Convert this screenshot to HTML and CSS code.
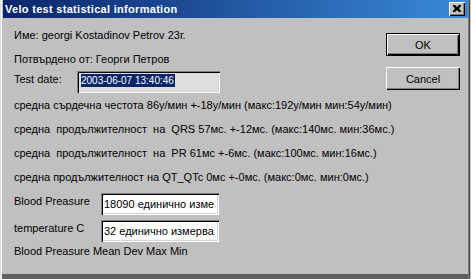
FILE: index.html
```html
<!DOCTYPE html>
<html>
<head>
<meta charset="utf-8">
<link rel="stylesheet" href="styles.css">
</head>
<body>
<div class="window">
  <div class="titlebar">
    <span class="title">Velo test statistical information</span>
    <span class="close"><svg width="8" height="7" viewBox="0 0 8 7"><path d="M0 0h2l2 2 2-2h2v1L6 3.5 8 6v1H6L4 5 2 7H0V6l2-2.5L0 1z" fill="#000"/></svg></span>
  </div>
  <div class="body">
    <div class="top">
      <div class="info">
        <div class="line l-name">Име: georgi Kostadinov Petrov 23г.</div>
        <div class="line l-conf">Потвърдено от: Георги Петров</div>
        <div class="daterow">
          <span class="date-label">Test date:</span>
          <div class="field date-field"><span class="sel">2003-06-07 13:40:46</span></div>
        </div>
      </div>
      <div class="buttons">
        <div class="btn btn-default"><span>OK</span></div>
        <div class="btn"><span>Cancel</span></div>
      </div>
    </div>
    <div class="stats">
      <div class="stat">средна сърдечна честота 86у/мин +-18у/мин (макс:192у/мин мин:54у/мин)</div>
      <div class="stat">средна&nbsp; продължителност&nbsp; на&nbsp; QRS 57мс. +-12мс. (макс:140мс. мин:36мс.)</div>
      <div class="stat">средна&nbsp; продължителност&nbsp; на&nbsp; PR 61мс +-6мс. (макс:100мс. мин:16мс.)</div>
      <div class="stat">средна продължителност на QT_QTc 0мс +-0мс. (макс:0мс. мин:0мс.)</div>
    </div>
    <div class="formrow r1">
      <span class="flabel">Blood Preasure</span>
      <div class="field vfield">18090 единично изме</div>
    </div>
    <div class="formrow r2">
      <span class="flabel">temperature C</span>
      <div class="field vfield">32 единично измерва</div>
    </div>
    <div class="line l-last">Blood Preasure Mean Dev Max Min</div>
  </div>
</div>
</body>
</html>
```
FILE: styles.css
```css
html, body {
  margin: 0;
  padding: 0;
  background: #c0c0c0;
}
.window {
  width: 471px;
  height: 279px;
  box-sizing: border-box;
  background: #c0c0c0;
  font-family: "Liberation Sans", Arial, sans-serif;
  font-size: 11px;
  color: #000;
  padding: 0 3px;
  box-shadow: inset 1px 0 #dcdcdc, inset 2px 0 #ffffff, inset -1px 0 #c8c8c8, inset -2px 0 #404040, inset -3px 0 #808080, inset 0 -5px #5e5e5e;
  overflow: hidden;
}
.titlebar {
  height: 18px;
  background: linear-gradient(to right, #0a246a, #3a8ad8);
  display: flex;
  align-items: center;
  justify-content: space-between;
  padding: 0 3px 0 2px;
}
.title {
  color: #fff;
  font-weight: bold;
  font-size: 11px;
  letter-spacing: 0.3px;
  line-height: 14px;
}
.close {
  width: 16px;
  height: 14px;
  box-sizing: border-box;
  background: #c0c0c0;
  box-shadow: inset 1px 1px #ffffff, inset -1px -1px #000000, inset -2px -2px #808080;
  display: flex;
  align-items: center;
  justify-content: center;
  padding: 0 1px 1px 0;
}
.close svg { display: block; }
.body {
  padding: 0 8px 0 11px;
}
.line {
  height: 14px;
  line-height: 14px;
  white-space: nowrap;
}
.top {
  display: flex;
  justify-content: space-between;
  align-items: flex-start;
}
.info {
  display: flex;
  flex-direction: column;
}
.l-name { margin-top: 10px; }
.l-conf { margin-top: 10px; }
.daterow {
  display: flex;
  align-items: flex-start;
  margin-top: 5px;
  height: 22px;
}
.date-label {
  width: 63px;
  line-height: 14px;
  margin-top: 1px;
}
.field {
  box-sizing: border-box;
  height: 22px;
  background: #ffffff;
  box-shadow: inset 1px 1px #808080, inset 2px 2px #000000, inset -1px -1px #ffffff, inset -2px -2px #d4d4d4;
  white-space: nowrap;
  overflow: hidden;
}
.date-field {
  width: 143px;
  background: #dedede;
  padding: 3px 2px 0 4px;
}
.sel {
  display: inline-block;
  background: #0a246a;
  color: #fff;
  font-size: 10px;
  line-height: 13px;
  height: 13px;
  padding-right: 1px;
}
.buttons {
  display: flex;
  flex-direction: column;
  gap: 11px;
  margin-top: 15px;
}
.btn {
  width: 74px;
  height: 23px;
  box-sizing: border-box;
  background: #c0c0c0;
  box-shadow: inset 1px 1px #ffffff, inset -1px -1px #000000, inset -2px -2px #808080;
  display: flex;
  align-items: center;
  justify-content: center;
  font-size: 11px;
}
.btn-default {
  border: 1px solid #000;
  box-shadow: inset 1px 1px #ffffff, inset -1px -1px #000000, inset -2px -2px #808080;
}
.stats .stat {
  height: 24px;
  line-height: 24px;
  white-space: nowrap;
}
.formrow {
  display: flex;
  align-items: flex-start;
  height: 22px;
}
.r1 { margin-top: 4px; }
.r2 { margin-top: 5px; }
.flabel {
  width: 87px;
  line-height: 14px;
  margin-top: 1px;
}
.vfield {
  width: 118px;
  line-height: 18px;
  padding: 2px 2px 0 3px;
}
.l-last { margin-top: 2px; }
```
